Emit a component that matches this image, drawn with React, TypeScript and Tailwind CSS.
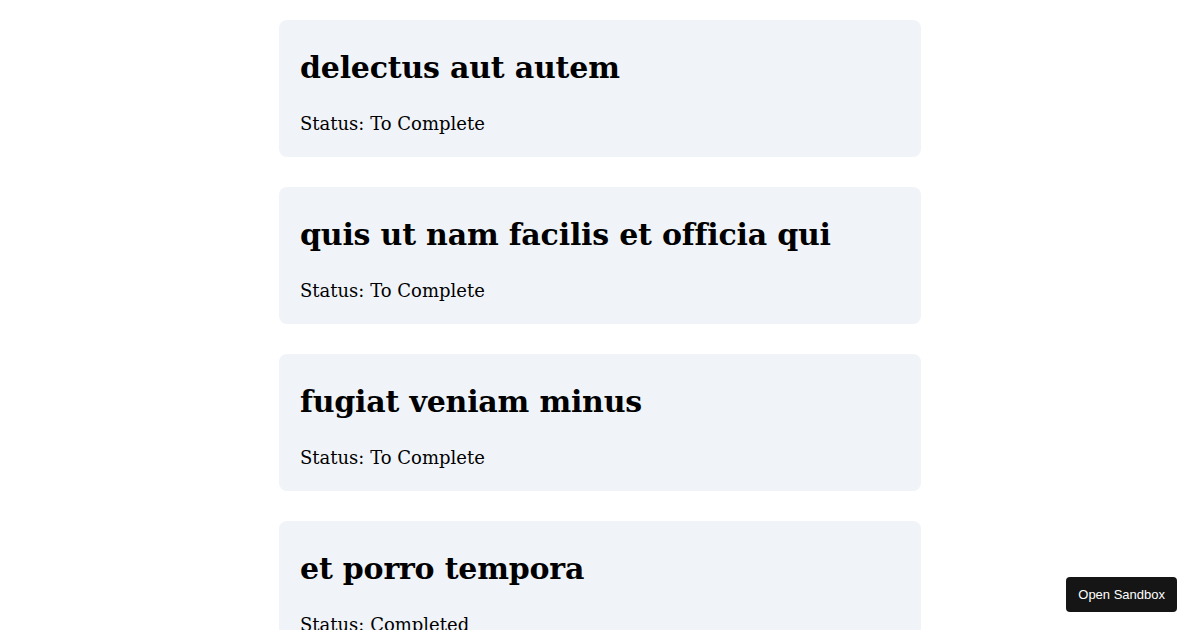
const todos = [
  { title: 'delectus aut autem', status: 'To Complete' },
  { title: 'quis ut nam facilis et officia qui', status: 'To Complete' },
  { title: 'fugiat veniam minus', status: 'To Complete' },
  { title: 'et porro tempora', status: 'Completed' },
  { title: 'laboriosam mollitia et enim quasi adipisci quia provident illum', status: 'To Complete' },
];

export default function App() {
  return (
    <div className="min-h-screen bg-white text-black" style={{ fontFamily: '"Roboto Slab", "DejaVu Serif", serif' }}>
      <div className="mx-auto flex w-[642px] flex-col gap-[30px] pt-5">
        {todos.map((t, i) => (
          <div key={i} className="rounded-lg bg-[#f0f4f8] px-[21px] pt-[26px] pb-[19px]">
            <h2 className="text-[30px] leading-[44px] font-bold tracking-[-0.2px]">{t.title}</h2>
            <p className="mt-[20px] text-[18px] leading-[28px]">Status: {t.status}</p>
          </div>
        ))}
      </div>
      <button className="fixed right-[23px] bottom-[18px] rounded bg-[#151515] px-[12px] py-[8px] text-[13px] text-white" style={{ fontFamily: '"Liberation Sans", Arial, sans-serif' }}>
        Open Sandbox
      </button>
    </div>
  );
}
